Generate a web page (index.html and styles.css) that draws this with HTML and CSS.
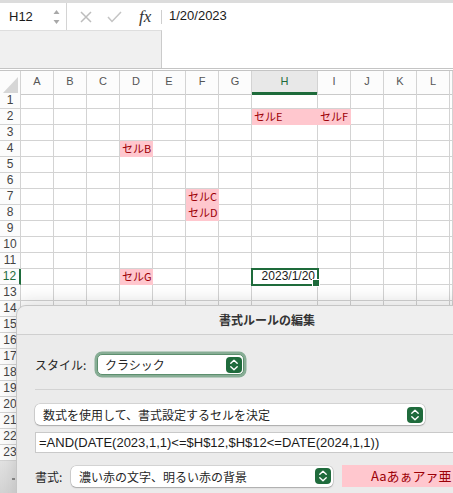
FILE: index.html
```html
<!DOCTYPE html>
<html lang="ja">
<head>
<meta charset="utf-8">
<title>書式ルールの編集</title>
<link rel="stylesheet" href="styles.css">
</head>
<body>
<div class="topstrip"></div>
<div class="fbar">
  <div class="fleft">
    <div class="ftop">
      <div class="namebox">
        <span>H12</span>
        <svg class="spin" width="7" height="16" viewBox="0 0 7 16"><path d="M0.5 5 L3.5 1 L6.5 5 Z" fill="#a8a8a8"/><path d="M0.5 11 L3.5 15 L6.5 11 Z" fill="#a8a8a8"/></svg>
      </div>
      <svg class="ico-x" width="12" height="12" viewBox="0 0 12 12"><path d="M1 1 L11 11 M11 1 L1 11" stroke="#bdbdbd" stroke-width="1.5" fill="none"/></svg>
      <svg class="ico-ok" width="15" height="12" viewBox="0 0 15 12"><path d="M1 6 L5 10.5 L14 1" stroke="#c4c4c4" stroke-width="1.5" fill="none"/></svg>
      <span class="fx">fx</span>
      <span class="fdiv"></span>
    </div>
    <div class="fgray"></div>
  </div>
  <div class="finput">1/20/2023</div>
</div>

<div class="sheet">
  <div class="row hrow">
    <div class="corner"><svg width="16" height="17" viewBox="0 0 16 17"><path d="M16 0 L16 17 L0 17 Z" fill="#d6d6d6"/></svg></div>
    <div class="ch">A</div><div class="ch">B</div><div class="ch">C</div><div class="ch">D</div><div class="ch">E</div><div class="ch">F</div><div class="ch">G</div><div class="ch ch-sel">H</div><div class="ch">I</div><div class="ch">J</div><div class="ch">K</div><div class="ch">L</div><div class="ch"></div>
  </div>
  <div class="row"><div class="rh">1</div><div class="c"></div><div class="c"></div><div class="c"></div><div class="c"></div><div class="c"></div><div class="c"></div><div class="c"></div><div class="c"></div><div class="c"></div><div class="c"></div><div class="c"></div><div class="c"></div><div class="c"></div></div>
  <div class="row"><div class="rh">2</div><div class="c"></div><div class="c"></div><div class="c"></div><div class="c"></div><div class="c"></div><div class="c"></div><div class="c"></div><div class="c hl">セルE</div><div class="c hl">セルF</div><div class="c"></div><div class="c"></div><div class="c"></div><div class="c"></div></div>
  <div class="row"><div class="rh">3</div><div class="c"></div><div class="c"></div><div class="c"></div><div class="c"></div><div class="c"></div><div class="c"></div><div class="c"></div><div class="c"></div><div class="c"></div><div class="c"></div><div class="c"></div><div class="c"></div><div class="c"></div></div>
  <div class="row"><div class="rh">4</div><div class="c"></div><div class="c"></div><div class="c"></div><div class="c hl">セルB</div><div class="c"></div><div class="c"></div><div class="c"></div><div class="c"></div><div class="c"></div><div class="c"></div><div class="c"></div><div class="c"></div><div class="c"></div></div>
  <div class="row"><div class="rh">5</div><div class="c"></div><div class="c"></div><div class="c"></div><div class="c"></div><div class="c"></div><div class="c"></div><div class="c"></div><div class="c"></div><div class="c"></div><div class="c"></div><div class="c"></div><div class="c"></div><div class="c"></div></div>
  <div class="row"><div class="rh">6</div><div class="c"></div><div class="c"></div><div class="c"></div><div class="c"></div><div class="c"></div><div class="c"></div><div class="c"></div><div class="c"></div><div class="c"></div><div class="c"></div><div class="c"></div><div class="c"></div><div class="c"></div></div>
  <div class="row"><div class="rh">7</div><div class="c"></div><div class="c"></div><div class="c"></div><div class="c"></div><div class="c"></div><div class="c hl">セルC</div><div class="c"></div><div class="c"></div><div class="c"></div><div class="c"></div><div class="c"></div><div class="c"></div><div class="c"></div></div>
  <div class="row"><div class="rh">8</div><div class="c"></div><div class="c"></div><div class="c"></div><div class="c"></div><div class="c"></div><div class="c hl">セルD</div><div class="c"></div><div class="c"></div><div class="c"></div><div class="c"></div><div class="c"></div><div class="c"></div><div class="c"></div></div>
  <div class="row"><div class="rh">9</div><div class="c"></div><div class="c"></div><div class="c"></div><div class="c"></div><div class="c"></div><div class="c"></div><div class="c"></div><div class="c"></div><div class="c"></div><div class="c"></div><div class="c"></div><div class="c"></div><div class="c"></div></div>
  <div class="row"><div class="rh">10</div><div class="c"></div><div class="c"></div><div class="c"></div><div class="c"></div><div class="c"></div><div class="c"></div><div class="c"></div><div class="c"></div><div class="c"></div><div class="c"></div><div class="c"></div><div class="c"></div><div class="c"></div></div>
  <div class="row"><div class="rh">11</div><div class="c"></div><div class="c"></div><div class="c"></div><div class="c"></div><div class="c"></div><div class="c"></div><div class="c"></div><div class="c"></div><div class="c"></div><div class="c"></div><div class="c"></div><div class="c"></div><div class="c"></div></div>
  <div class="row"><div class="rh rh-sel">12</div><div class="c"></div><div class="c"></div><div class="c"></div><div class="c hl">セルG</div><div class="c"></div><div class="c"></div><div class="c"></div><div class="c sel">2023/1/20</div><div class="c"></div><div class="c"></div><div class="c"></div><div class="c"></div><div class="c"></div></div>
  <div class="row"><div class="rh">13</div><div class="c"></div><div class="c"></div><div class="c"></div><div class="c"></div><div class="c"></div><div class="c"></div><div class="c"></div><div class="c"></div><div class="c"></div><div class="c"></div><div class="c"></div><div class="c"></div><div class="c"></div></div>
  <div class="row"><div class="rh">14</div><div class="c"></div><div class="c"></div><div class="c"></div><div class="c"></div><div class="c"></div><div class="c"></div><div class="c"></div><div class="c"></div><div class="c"></div><div class="c"></div><div class="c"></div><div class="c"></div><div class="c"></div></div>
  <div class="row"><div class="rh">15</div></div>
  <div class="row"><div class="rh">16</div></div>
  <div class="row"><div class="rh">17</div></div>
  <div class="row"><div class="rh">18</div></div>
  <div class="row"><div class="rh">19</div></div>
  <div class="row"><div class="rh">20</div></div>
  <div class="row"><div class="rh">21</div></div>
  <div class="row"><div class="rh">22</div></div>
  <div class="row"><div class="rh">23</div></div>
</div>
<div class="sheetfoot"><span class="tick"></span></div>

<div class="dialog">
  <div class="dtitle">書式ルールの編集</div>
  <div class="dbody">
    <div class="drow style-row">
      <span class="lbl lbl-style">スタイル:</span>
      <div class="popup popup-style focus">
        <span>クラシック</span>
        <svg class="step" width="16" height="16" viewBox="0 0 16 16"><rect x="0" y="0" width="16" height="16" rx="4" fill="#1f6b3c"/><path d="M4.8 6.3 L8 3.3 L11.2 6.3 M4.8 9.7 L8 12.7 L11.2 9.7" stroke="#fff" stroke-width="1.4" fill="none" stroke-linecap="round" stroke-linejoin="round"/></svg>
      </div>
    </div>
    <div class="sep"></div>
    <div class="popup popup-rule">
      <span>数式を使用して、書式設定するセルを決定</span>
      <svg class="step" width="16" height="16" viewBox="0 0 16 16"><rect x="0" y="0" width="16" height="16" rx="4" fill="#1f6b3c"/><path d="M4.8 6.3 L8 3.3 L11.2 6.3 M4.8 9.7 L8 12.7 L11.2 9.7" stroke="#fff" stroke-width="1.4" fill="none" stroke-linecap="round" stroke-linejoin="round"/></svg>
    </div>
    <div class="formula">=AND(DATE(2023,1,1)&lt;=$H$12,$H$12&lt;=DATE(2024,1,1))</div>
    <div class="drow fmt-row">
      <span class="lbl lbl-fmt">書式:</span>
      <div class="popup popup-fmt">
        <span>濃い赤の文字、明るい赤の背景</span>
        <svg class="step" width="16" height="16" viewBox="0 0 16 16"><rect x="0" y="0" width="16" height="16" rx="4" fill="#1f6b3c"/><path d="M4.8 6.3 L8 3.3 L11.2 6.3 M4.8 9.7 L8 12.7 L11.2 9.7" stroke="#fff" stroke-width="1.4" fill="none" stroke-linecap="round" stroke-linejoin="round"/></svg>
      </div>
      <div class="preview">Aaあぁアァ亜</div>
    </div>
  </div>
</div>
</body>
</html>
```

FILE: styles.css
```css
* { box-sizing: border-box; }
html, body { margin: 0; padding: 0; }
body {
  width: 453px;
  height: 493px;
  overflow: hidden;
  position: relative;
  background: #fff;
  font-family: "Liberation Sans", "Noto Sans CJK JP", Arial, sans-serif;
  color: #222;
}

/* formula bar */
.topstrip { height: 3px; background: #dcdcdc; }
.fbar {
  display: flex;
  height: 68px;
  border-bottom: 3px double #c4c4c4;
}
.fleft { width: 162px; display: flex; flex-direction: column; }
.ftop {
  height: 27px;
  display: flex;
  align-items: center;
  background: #fff;
}
.namebox {
  width: 67px;
  height: 100%;
  border-right: 1px solid #d4d4d4;
  display: flex;
  align-items: center;
  padding-left: 9px;
  font-size: 13px;
  color: #1a1a1a;
}
.spin { margin-left: auto; margin-right: 6px; }
.ico-x { margin-left: 13px; }
.ico-ok { margin-left: 15px; }
.fx {
  margin-left: 17px;
  font-family: "Liberation Serif", "Times New Roman", serif;
  font-style: italic;
  font-size: 17px;
  color: #333;
  line-height: 1;
}
.fdiv { margin-left: auto; width: 1px; height: 14px; background: #cfcfcf; }
.fgray {
  flex: 1;
  background: #f0f0f0;
  border-top: 1px solid #dedede;
  border-right: 1px solid #cbcbcb;
}
.finput {
  flex: 1;
  padding: 5px 0 0 7px;
  font-size: 13px;
  line-height: 16px;
  color: #1a1a1a;
}

/* sheet */
.row {
  display: grid;
  grid-template-columns: 21px repeat(7, 33px) 66px repeat(4, 33px) 1fr;
  height: 16px;
}
.row > div {
  border-right: 1px solid #d3d3d3;
  border-bottom: 1px solid #d3d3d3;
}
.hrow { height: 22px; }
.corner {
  background: #fcfcfc;
  display: flex;
  align-items: flex-end;
  justify-content: flex-end;
  padding: 0 2px 0 0;
}
.corner svg { display: block; }
.ch {
  background: #fcfcfc;
  text-align: center;
  font-size: 11px;
  line-height: 21px;
  color: #555;
}
.row > .ch { border-bottom-color: #cacaca; }
.row > .ch-sel {
  background: #e8e8e8;
  color: #1e6b3b;
  border-bottom: 3px solid #1e6b3b;
}
.rh {
  background: #fcfcfc;
  text-align: center;
  font-size: 12px;
  line-height: 15px;
  color: #444;
}
.row > .rh-sel {
  color: #1e6b3b;
  border-right: 2px solid #1e6b3b;
}
.c {
  font-family: "Noto Sans CJK JP", "Liberation Sans", sans-serif;
  font-size: 11px;
  line-height: 15px;
  padding-left: 2px;
  white-space: nowrap;
  overflow: hidden;
}
.row > .hl {
  background: #ffc7ce;
  border-color: #ffc7ce;
  color: #9c0006;
}
.row > .sel {
  position: relative;
  z-index: 1;
  overflow: visible;
  text-align: right;
  padding-right: 2px;
  font-family: "Liberation Sans", Arial, sans-serif;
  font-size: 12px;
  color: #1a1a1a;
  outline: 2px solid #1e6b3b;
  outline-offset: -1px;
}
.sel::after {
  content: "";
  position: absolute;
  right: -3px;
  bottom: -3px;
  width: 6px;
  height: 6px;
  background: #1e6b3b;
  border: 1px solid #fff;
}
.sheetfoot {
  height: 40px;
  background: linear-gradient(#e2e2e2, #d0d0d0);
  position: relative;
}
.tick {
  position: absolute;
  left: 12px;
  top: 17px;
  width: 3px;
  height: 2px;
  background: #888;
}

/* dialog */
.dialog {
  position: absolute;
  left: 16px;
  top: 305px;
  width: 502px;
  height: 200px;
  background: #ebebeb;
  border: 1px solid #c6c6c6;
  border-radius: 10px 10px 0 0;
  box-shadow: 0 -4px 18px rgba(0, 0, 0, 0.13);
  font-family: "Noto Sans CJK JP", "Liberation Sans", sans-serif;
  font-size: 12px;
  color: #262626;
}
.dtitle {
  height: 29px;
  border-bottom: 1px solid #cfcfcf;
  background: #efefef;
  border-radius: 10px 10px 0 0;
  text-align: center;
  font-weight: bold;
  font-size: 12px;
  line-height: 28px;
  color: #333;
}
.dbody { padding-left: 18px; }
.drow { display: flex; align-items: center; }
.style-row { margin-top: 19px; }
.lbl { line-height: 21px; white-space: nowrap; }
.lbl-style { width: 62px; }
.lbl-fmt { width: 36px; }
.popup {
  display: flex;
  align-items: center;
  height: 21px;
  background: #fff;
  border-radius: 5px;
  box-shadow: 0 0 0 0.5px rgba(0, 0, 0, 0.2), 0 1px 1.5px rgba(0, 0, 0, 0.2);
  padding: 0 2px 0 8px;
  white-space: nowrap;
}
.popup .step { margin-left: auto; flex: none; display: block; }
.popup-style {
  width: 147px;
  padding-left: 7px;
  padding-right: 1px;
}
.focus {
  border: 1px solid #5d8f6e;
  box-shadow: 0 0 0 2.5px #87ad95;
}
.sep {
  margin-top: 14px;
  height: 1px;
  background: #d3d3d3;
}
.popup-rule { margin-top: 14px; width: 390px; }
.formula {
  margin-top: 7px;
  width: 480px;
  height: 21px;
  background: #fff;
  border: 1px solid #c9c9c9;
  padding-left: 3px;
  font-family: "Liberation Sans", Arial, sans-serif;
  font-size: 13px;
  line-height: 19px;
  color: #1a1a1a;
  white-space: nowrap;
}
.fmt-row { margin-top: 12px; }
.popup-fmt { width: 262px; }
.preview {
  margin-left: 9px;
  width: 170px;
  height: 22px;
  background: #ffc7ce;
  color: #9c0006;
  font-size: 13px;
  line-height: 22px;
  padding-left: 29px;
  white-space: nowrap;
}
```
